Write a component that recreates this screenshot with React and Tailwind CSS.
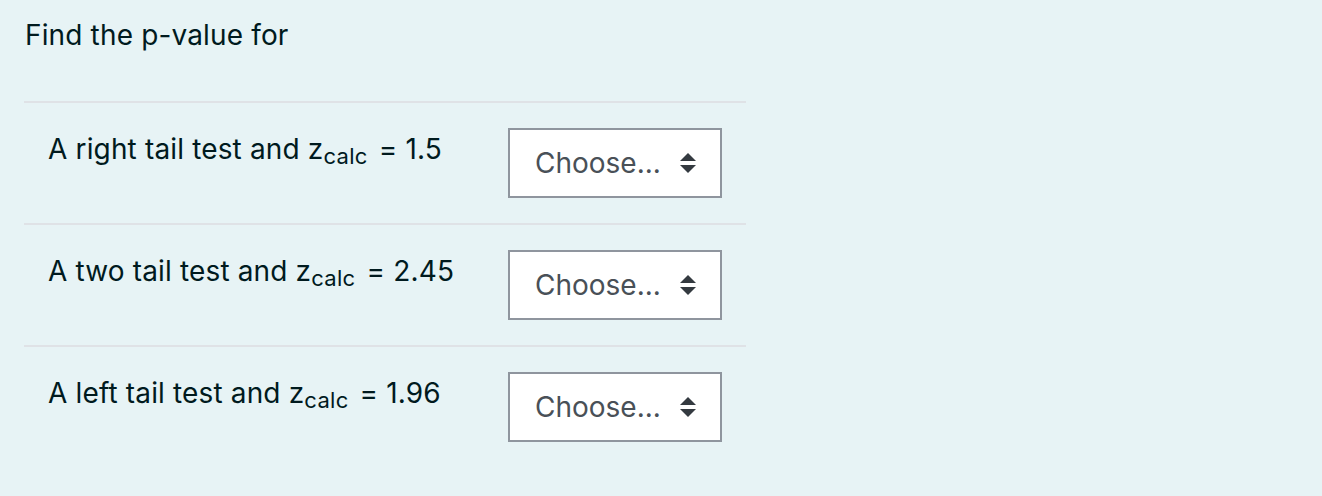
import React from "react";

const rows = [
  { kind: "right", value: "1.5" },
  { kind: "two", value: "2.45" },
  { kind: "left", value: "1.96" },
];

function UpDownArrows() {
  return (
    <svg width="16" height="20" viewBox="0 0 4 5" className="shrink-0">
      <path d="M2 0L0 2h4zm0 5L0 3h4z" fill="#343a40" />
    </svg>
  );
}

function ChooseSelect() {
  return (
    <div className="flex h-[70px] w-[214px] items-center justify-between border-2 border-[#8f959e] bg-white pl-[25px] pr-[24px]">
      <span className="text-[28px] leading-[40px] text-[#495057]">Choose...</span>
      <UpDownArrows />
    </div>
  );
}

export default function App() {
  return (
    <div
      className="min-h-[496px] w-full bg-[#e7f3f5] pl-[25px] pt-[15px] text-[#001a1e]"
      style={{ fontFamily: "Inter, 'Open Sans', sans-serif" }}
    >
      <p className="text-[28px] leading-[40px] tracking-[0.15px]">Find the p-value for</p>
      <div className="ml-[-1px] mt-[46px] w-[722px]">
        {rows.map((r) => (
          <div key={r.kind} className="flex border-t-2 border-[#dfe2e6] py-[25px]">
            <div className="w-[484px] pl-[24px] pt-[1px] text-[28px] leading-[40px] tracking-[0.15px]">
              A {r.kind} tail test and z
              <sub className="relative bottom-[-5px] mr-[3px] align-baseline text-[22px] leading-none tracking-[0.3px]">calc</sub>
              {" "}= {r.value}
            </div>
            <ChooseSelect />
          </div>
        ))}
      </div>
    </div>
  );
}
